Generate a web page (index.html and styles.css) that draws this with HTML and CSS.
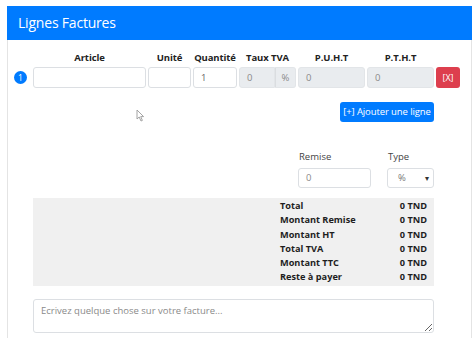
FILE: index.html
```html
<!DOCTYPE html>
<html lang="fr">
<head>
<meta charset="utf-8">
<title>Lignes Factures</title>
<link rel="stylesheet" href="styles.css">
</head>
<body>
<div class="card">
  <div class="card-header">Lignes Factures</div>
  <div class="card-body">
    <div class="lines">
      <div class="cell-head"></div>
      <div class="cell-head">Article</div>
      <div class="cell-head">Unité</div>
      <div class="cell-head">Quantité</div>
      <div class="cell-head">Taux TVA</div>
      <div class="cell-head">P.U.H.T</div>
      <div class="cell-head">P.T.H.T</div>
      <div class="cell-head"></div>

      <div class="badge">1</div>
      <div class="input"></div>
      <div class="input"></div>
      <div class="input val">1</div>
      <div class="group">
        <div class="input disabled">0</div>
        <div class="addon">%</div>
      </div>
      <div class="input disabled">0</div>
      <div class="input disabled">0</div>
      <div class="btn-danger">[X]</div>
    </div>

    <div class="section">
      <div class="add-row">
        <div class="btn-primary">[+] Ajouter une ligne</div>
      </div>

      <div class="discount">
        <div class="field remise">
          <div class="label">Remise</div>
          <div class="input plain">0</div>
        </div>
        <div class="field type">
          <div class="label">Type</div>
          <div class="input select"><span>%</span><span class="caret">▾</span></div>
        </div>
      </div>

      <div class="summary">
        <div class="sum-row"><span>Total</span><span>0 TND</span></div>
        <div class="sum-row"><span>Montant Remise</span><span>0 TND</span></div>
        <div class="sum-row"><span>Montant HT</span><span>0 TND</span></div>
        <div class="sum-row"><span>Total TVA</span><span>0 TND</span></div>
        <div class="sum-row"><span>Montant TTC</span><span>0 TND</span></div>
        <div class="sum-row"><span>Reste à payer</span><span>0 TND</span></div>
      </div>

      <textarea class="notes" placeholder="Ecrivez quelque chose sur votre facture..."></textarea>
    </div>
  </div>
</div>
<svg class="cursor" width="9" height="13" viewBox="0 0 9 13"><path d="M1 1 L1 10 L3.2 8 L5 12 L6.4 11.4 L4.7 7.6 L7.6 7.6 Z" fill="#fff" stroke="#9a9a9a" stroke-width="0.9" stroke-linejoin="round"/></svg>
</body>
</html>
```
FILE: styles.css
```css
html, body {
  margin: 0;
  padding: 0;
  background: #fff;
  font-family: "Open Sans", "Noto Sans", sans-serif;
  color: #222;
}
body {
  box-sizing: border-box;
  padding: 6px 2px 0 7px;
  height: 338px;
  overflow: hidden;
  position: relative;
}
.card {
  width: 465px;
  height: 100%;
  border: 1px solid #e4e4e4;
  border-top: none;
  border-bottom: none;
  box-sizing: border-box;
}
.card-header {
  background: #007bff;
  color: #fff;
  height: 34px;
  line-height: 34px;
  padding-left: 11px;
  font-size: 14px;
  letter-spacing: -0.2px;
  margin: 0 -1px;
}
.card-body {
  padding: 11px 11px 0 6px;
}
.lines {
  display: grid;
  grid-template-columns: 17px 113px 43px 44px 57px 67px 67px 24px;
  column-gap: 2px;
  row-gap: 2px;
  align-items: center;
}
.cell-head {
  font-size: 9.5px;
  font-weight: 700;
  text-align: center;
  line-height: 14px;
  letter-spacing: -0.1px;
}
.badge {
  width: 13px;
  height: 13px;
  border-radius: 50%;
  background: #007bff;
  color: #fff;
  font-size: 8.5px;
  line-height: 13px;
  text-align: center;
}
.input {
  height: 21px;
  box-sizing: border-box;
  border: 1px solid #dcdfe3;
  border-radius: 3px;
  background: #fff;
  font-size: 9.5px;
  line-height: 19px;
  padding-left: 7px;
  color: #8a8a8a;
}
.input.val {
  color: #666;
}
.input.disabled {
  background: #e9ecef;
  border-color: #e2e5e8;
}
.group {
  display: flex;
  height: 21px;
}
.group .input {
  flex: 1;
  border-radius: 3px 0 0 3px;
}
.addon {
  width: 21px;
  box-sizing: border-box;
  background: #e9ecef;
  border: 1px solid #e2e5e8;
  border-left: 1px solid #dadde0;
  border-radius: 0 3px 3px 0;
  font-size: 9.5px;
  line-height: 19px;
  text-align: center;
  color: #8a8a8a;
}
.btn-danger {
  height: 21px;
  background: #dc3545;
  border-radius: 3px;
  color: #fff;
  font-size: 9px;
  line-height: 21px;
  text-align: center;
  opacity: 0.95;
}
.section {
  padding: 0 26px 0 19px;
}
.add-row {
  display: flex;
  justify-content: flex-end;
  margin-top: 14px;
}
.btn-primary {
  background: #007bff;
  color: #fff;
  border-radius: 3px;
  width: 94px;
  height: 20px;
  line-height: 20px;
  font-size: 9.5px;
  text-align: center;
  letter-spacing: -0.1px;
}
.discount {
  display: flex;
  justify-content: flex-end;
  gap: 16px;
  margin-top: 29px;
}
.field .label {
  font-size: 9.5px;
  color: #444;
  line-height: 12px;
  margin-left: 1px;
  margin-bottom: 5px;
}
.remise {
  width: 73px;
}
.type {
  width: 47px;
}
.input.plain {
  height: 20px;
  line-height: 18px;
}
.input.select {
  height: 20px;
  line-height: 18px;
  display: flex;
  justify-content: space-between;
  padding: 0 4px 0 10px;
  color: #777;
}
.caret {
  font-size: 8px;
  color: #333;
}
.summary {
  margin-top: 10px;
  background: #f0f0f0;
  padding: 1px 7px 1px 247px;
}
.sum-row {
  display: flex;
  justify-content: space-between;
  font-size: 9.2px;
  font-weight: 700;
  line-height: 14.3px;
  color: #1e1e1e;
}
.notes {
  display: block;
  margin-top: 13px;
  width: 100%;
  height: 34px;
  box-sizing: border-box;
  border: 1px solid #dcdfe3;
  border-radius: 3px;
  font-family: "Open Sans", "Noto Sans", sans-serif;
  font-size: 9.5px;
  padding: 4px 7px;
  resize: vertical;
}
.notes::placeholder {
  color: #8a8a8a;
}
.cursor {
  position: absolute;
  left: 136px;
  top: 109px;
}
```
